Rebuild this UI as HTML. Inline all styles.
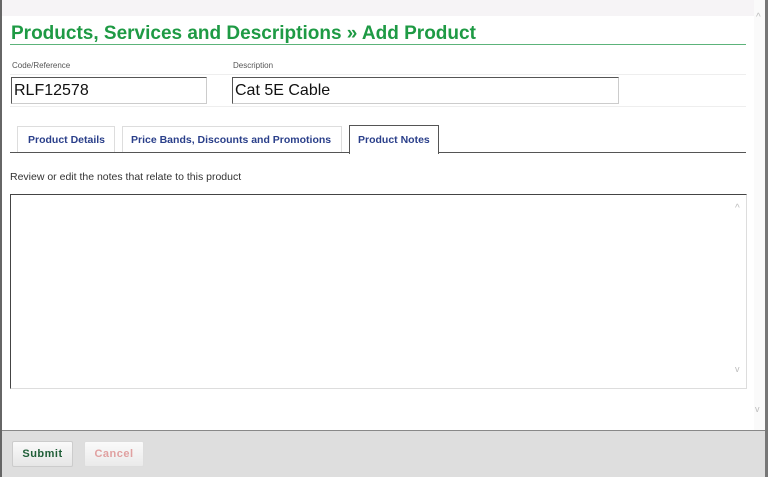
<!DOCTYPE html>
<html><head><meta charset="utf-8"><style>
*{box-sizing:border-box;margin:0;padding:0}
body{width:768px;height:477px;overflow:hidden;background:#fff;font-family:"Liberation Sans",Arial,sans-serif;position:relative}
.a{position:absolute}
</style></head><body>
<div class="a" style="left:0;top:0;width:2px;height:477px;background:#666"></div>
<div class="a" style="left:765px;top:0;width:3px;height:477px;background:#777"></div>
<div class="a" style="left:2px;top:0;width:752px;height:16px;background:#f6f4f6"></div>
<div class="a" style="left:754px;top:0;width:11px;height:431px;background:#fafafa"></div>
<div class="a" style="left:756px;top:12px;color:#bbb;font-size:10px">^</div>
<div class="a" style="left:755px;top:404px;color:#bbb;font-size:9px">v</div>
<div class="a" style="left:11px;top:23px;font-size:19px;font-weight:bold;color:#1e9a44;white-space:nowrap">Products, Services and Descriptions » Add Product</div>
<div class="a" style="left:10px;top:44px;width:736px;height:1px;background:#5cb37a"></div>
<div class="a" style="left:12px;top:61px;font-size:8px;color:#555">Code/Reference</div>
<div class="a" style="left:233px;top:61px;font-size:8px;color:#555">Description</div>
<div class="a" style="left:10px;top:74px;width:736px;height:1px;background:#eee"></div>
<div class="a" style="left:10px;top:106px;width:736px;height:1px;background:#eee"></div>
<div class="a" style="left:11px;top:77px;width:196px;height:27px;border:1px solid #ccc;border-top-color:#555;border-left-color:#555;font-size:16px;padding:4px 2px;color:#111">RLF12578</div>
<div class="a" style="left:232px;top:77px;width:387px;height:27px;border:1px solid #ccc;border-top-color:#555;border-left-color:#555;font-size:16px;padding:4px 2px;color:#111">Cat 5E Cable</div>
<div class="a" style="left:10px;top:152px;width:736px;height:1px;background:#555"></div>
<div class="a" style="left:17px;top:126px;width:98px;height:26px;border:1px solid #ddd;border-bottom:none;background:#fff;font-size:10.5px;font-weight:bold;color:#2a3f8a;padding:7px 0 0 10px">Product Details</div>
<div class="a" style="left:122px;top:126px;width:220px;height:26px;border:1px solid #ddd;border-bottom:none;background:#fff;font-size:10.5px;font-weight:bold;color:#2a3f8a;padding:7px 0 0 8px;white-space:nowrap">Price Bands, Discounts and Promotions</div>
<div class="a" style="left:349px;top:125px;width:90px;height:29px;border:1px solid #555;border-bottom:none;background:#fff;font-size:10.5px;font-weight:bold;color:#2a3f8a;padding:8px 0 0 8px">Product Notes</div>
<div class="a" style="left:10px;top:171px;font-size:10.5px;color:#333">Review or edit the notes that relate to this product</div>
<div class="a" style="left:10px;top:194px;width:737px;height:195px;border:1px solid #ddd;border-top-color:#444;border-left-color:#444"></div>
<div class="a" style="left:735px;top:203px;color:#bbb;font-size:10px">^</div>
<div class="a" style="left:735px;top:364px;color:#bbb;font-size:9px">v</div>
<div class="a" style="left:2px;top:430px;width:763px;height:47px;background:#dedede;border-top:1px solid #888"></div>
<div class="a" style="left:12px;top:441px;width:61px;height:26px;border:1px solid #ccc;border-radius:2px;background:linear-gradient(#fafafa,#e6e6e6);font-size:11px;font-weight:bold;color:#1f5e37;text-align:center;line-height:25px;letter-spacing:.5px">Submit</div>
<div class="a" style="left:84px;top:441px;width:60px;height:26px;border:1px solid #ddd;border-radius:2px;background:linear-gradient(#fafafa,#eaeaea);font-size:11px;font-weight:bold;color:#e0a0a0;text-align:center;line-height:25px;letter-spacing:.5px">Cancel</div>
</body></html>
